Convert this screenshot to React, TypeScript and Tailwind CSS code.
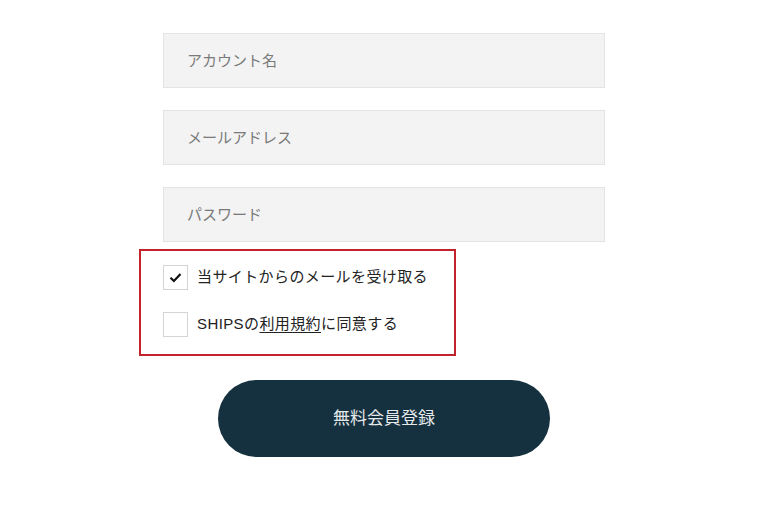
export default function App() {
  const font = {
    fontFamily: '"Liberation Sans", "Noto Sans CJK JP", sans-serif',
  };

  return (
    <div className="min-h-screen bg-white flex justify-center" style={font}>
      <div className="w-[442px] pt-[33px] flex flex-col">
        {/* Inputs */}
        <div className="flex flex-col gap-[22px]">
          {["アカウント名", "メールアドレス", "パスワード"].map((p) => (
            <input
              key={p}
              placeholder={p}
              type={p === "パスワード" ? "password" : "text"}
              className="h-[55px] w-full bg-[#f3f3f3] border border-[#e4e4e4] pl-[23px] text-[15px] text-[#333] placeholder:text-[#7a7a7a] outline-none"
            />
          ))}
        </div>

        {/* Checkboxes */}
        <div className="mt-[7px] -ml-[24px] w-[317px] border-2 border-[#c1222b] pt-[14px] pb-[17px] pl-[22px] flex flex-col gap-[22px]">
          <label className="flex items-center gap-[9px]">
            <span className="w-[25px] h-[25px] border border-[#d4d4d4] bg-white flex items-center justify-center">
              <svg width="13" height="11" viewBox="0 0 13 11">
                <path
                  d="M1.5 5.8 L4.9 9 L11.5 2"
                  fill="none"
                  stroke="#111"
                  strokeWidth="2.2"
                />
              </svg>
            </span>
            <span className="text-[15px] text-[#222] tracking-[0.4px]">
              当サイトからのメールを受け取る
            </span>
          </label>
          <label className="flex items-center gap-[9px]">
            <span className="w-[25px] h-[25px] border border-[#d4d4d4] bg-white" />
            <span className="text-[15px] text-[#222] tracking-[0.4px]">
              SHIPSの<span className="underline underline-offset-[3px]">利用規約</span>に同意する
            </span>
          </label>
        </div>

        {/* Submit */}
        <div className="flex justify-center mt-[24px]">
          <button className="w-[332px] h-[77px] rounded-full bg-[#15303f] text-[#e6e9eb] text-[17px]">
            無料会員登録
          </button>
        </div>
      </div>
    </div>
  );
}
